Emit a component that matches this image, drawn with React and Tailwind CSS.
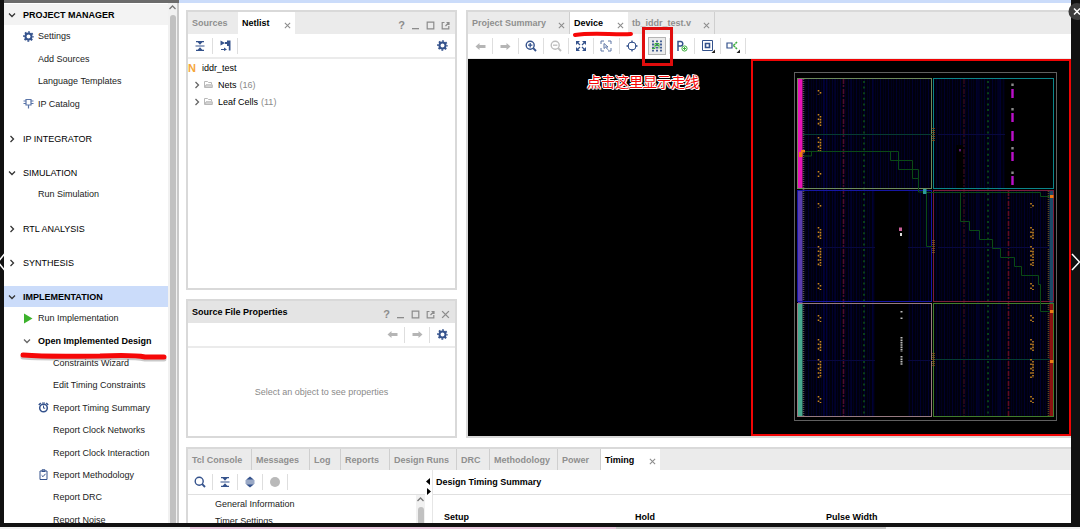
import React, { useState } from "react";
import { clsx } from "clsx";

const NAVY = "#34528c";

/* ---------- Icons ---------- */

const Chevron = ({ open, color = "#333" }) => (
  <svg width="8" height="8" viewBox="0 0 8 8" fill="none" stroke={color} strokeWidth="1.3" className="shrink-0">
    <path d={open ? "M1 2.5 L4 5.5 L7 2.5" : "M2.5 1 L5.5 4 L2.5 7"} />
  </svg>
);

const Gear = () => (
  <svg width="11" height="11" viewBox="0 0 11 11" fill="none" stroke={NAVY}>
    <circle cx="5.5" cy="5.5" r="3" strokeWidth="2" />
    <circle cx="5.5" cy="5.5" r="4.5" strokeWidth="1.6" strokeDasharray="1.8 1.73" strokeDashoffset="0.9" />
  </svg>
);

const Chip = () => (
  <svg width="11" height="11" viewBox="0 0 11 11" fill="none" stroke="#5a75a8" strokeWidth="1.2">
    <path d="M3 1.5 H8 V7 H3 Z M0.5 3 H3 M0.5 5.5 H3 M8 3 H10.5 M8 5.5 H10.5 M5.5 7 V10.5" />
  </svg>
);

const Play = () => (
  <svg width="11" height="11" viewBox="0 0 11 11">
    <path d="M1 0.5 L9.5 5.5 L1 10.5 Z" fill="#3cb22c" />
  </svg>
);

const Timer = () => (
  <svg width="11" height="11" viewBox="0 0 11 11" fill="none" stroke={NAVY}>
    <circle cx="5.5" cy="6" r="3.8" strokeWidth="1.5" />
    <path d="M5.5 3.5 V6.2 H7.2 M4 1 H7" />
    <path d="M0.8 3 L2.8 1 M10.2 3 L8.2 1" strokeWidth="1.5" />
  </svg>
);

const Clipboard = () => (
  <svg width="11" height="11" viewBox="0 0 11 11" fill="none" stroke={NAVY}>
    <path d="M2 2 H9 V10.5 H2 Z M4 0.8 H7 V2.5 H4 Z M3.6 6.3 L5 7.7 L7.5 4.8" />
  </svg>
);

const CollapseAll = () => (
  <svg width="10" height="12" viewBox="0 0 10 12" fill={NAVY}>
    <path d="M1 1 H9 V2.3 H1 Z M2.5 2 H7.5 L5 4.8 Z M0.5 5.4 H9.5 V6.6 H0.5 Z M5 7.2 L7.500 10 H2.5 Z M1 9.700 H9 V11 H1 Z" />
  </svg>
);

const ExpandAll = () => (
  <svg width="10" height="12" viewBox="0 0 10 12" fill={NAVY}>
    <path d="M5 0.5 L9 3.800 H1 Z M0.5 4.5 H9.5 V5.6 H0.5 Z M0.5 6.4 H9.5 V7.5 H0.5 Z M1 8.2 H9 L5 11.5 Z" />
  </svg>
);

const Hierarchy = () => (
  <svg width="11" height="11" viewBox="0 0 11 11" fill={NAVY}>
    <path d="M0.5 0.5 L5 3 L0.5 5.5 Z M5 2 H7 V4 H5 Z M7 0.5 H10.5 V10.5 H8.8 V6 H7 Z M1 9 H4 V7.5 L7 9.5 L4 11 V10 H1 Z" />
  </svg>
);

const Arrow = ({ right }) => (
  <svg width="11" height="9" viewBox="0 0 11 9" fill="#b5b5b5">
    <path d={right ? "M10.5 4.5 L6.5 1 V3 H0.5 V6 H6.5 V8 Z" : "M0.5 4.5 L4.5 1 V3 H10.5 V6 H4.5 V8 Z"} />
  </svg>
);

const Magnifier = ({ sign, color = NAVY }) => (
  <svg width="12" height="12" viewBox="0 0 12 12" fill="none" stroke={color}>
    <circle cx="5.2" cy="5.2" r="4" strokeWidth="1.4" />
    <path d="M8.2 8.2 L11 11" strokeWidth="1.9" />
    {sign && <path d={sign === "+" ? "M3 5.2 H7.4 M5.2 3 V7.4" : "M3 5.2 H7.4"} strokeWidth="1.3" />}
  </svg>
);

const Fit = () => (
  <svg width="12" height="12" viewBox="0 0 12 12" fill={NAVY} stroke={NAVY}>
    <path stroke="none" d="M1 1 H5 L1 5 Z M11 1 V5 L7 1 Z M1 11 V7 L5 11 Z M11 11 H7 L11 7 Z" />
    <path d="M2 2 L5 5 M10 2 L7 5 M2 10 L5 7 M10 10 L7 7" strokeWidth="1.2" />
  </svg>
);

const SelectArea = () => (
  <svg width="12" height="12" viewBox="0 0 12 12" fill="none" stroke="#5e76a6">
    <path d="M1 4 V1 H4 M8 1 H11 V4 M11 8 V11 H8 M4 11 H1 V8" />
    <path d="M4 3.5 V8.5 L5.5 7.2 L8.5 10 M4 3.5 L8 7 H5.5" />
  </svg>
);

const Crosshair = () => (
  <svg width="12" height="12" viewBox="0 0 12 12" fill="none" stroke={NAVY}>
    <circle cx="6" cy="6" r="4" />
    <path d="M6 0.5 V3 M6 9 V11.5 M0.5 6 H3 M9 6 H11.5" strokeWidth="1.3" />
  </svg>
);

const Routing = () => (
  <svg width="12" height="12" viewBox="0 0 12 12" fill="none">
    <path d="M2 0.5 V11.5 M6 0.5 V11.5 M10 0.5 V11.5" stroke={NAVY} strokeWidth="1.8" strokeDasharray="1.8 1.3" />
    <path d="M1 8.5 H4 V3.5 H8 V8.5 M4 5.5 H8" stroke="#3cae3c" />
  </svg>
);

const PinPlus = () => (
  <svg width="12" height="12" viewBox="0 0 12 12" fill="none">
    <path d="M2 11 V1.500 H5 A2.3 2.3 0 0 1 5 6 H2" stroke={NAVY} strokeWidth="1.5" />
    <circle cx="8.5" cy="8.5" r="2.6" stroke="#3cae3c" />
    <path d="M8.5 7 V10 M7 8.5 H10" stroke="#3cae3c" />
  </svg>
);

const Layers = () => (
  <svg width="14" height="14" viewBox="0 0 14 14" fill="none">
    <path d="M1.5 1.5 H11.5 V11.5 H1.5 Z" stroke={NAVY} />
    <path d="M4.5 4.5 H8.5 V8.5 H4.5 Z" stroke={NAVY} strokeWidth="1.6" />
    <path d="M14 10.5 V14 H10.5 Z" fill="#222" />
  </svg>
);

const Connect = () => (
  <svg width="14" height="14" viewBox="0 0 14 14" fill="none">
    <path d="M1 4 H6 V9 H1 Z" stroke={NAVY} strokeWidth="1.2" />
    <path d="M7.5 6.5 L11 3 M7.5 6.5 L11 10" stroke="#3cae3c" strokeWidth="1.6" strokeDasharray="2.2 0.6" />
    <path d="M14 10.5 V14 H10.5 Z" fill="#222" />
  </svg>
);

const Folder = () => (
  <svg width="9" height="9" viewBox="0 0 9 9" fill="none" stroke="#b8b8b8">
    <path d="M0.5 7.5 V1.5 H3.5 L4.5 2.5 H7.5 V4" />
    <path d="M0.8 7.5 L2 4.8 H8.3 V7.5 Z" fill="#d4d4d4" />
  </svg>
);

const CloseX = ({ size = 7 }) => (
  <svg width={size} height={size} viewBox="0 0 8 8" fill="none" stroke="#8c8c8c" strokeWidth="1.2">
    <path d="M1 1 L7 7 M7 1 L1 7" />
  </svg>
);

const ScrollUp = () => (
  <svg width="9" height="9" viewBox="0 0 9 9" fill="none" stroke="#777" strokeWidth="1.3">
    <path d="M1.5 6 L4.5 3 L7.5 6" />
  </svg>
);

/* ---------- Shared pieces ---------- */

const Tab = ({ label, active, closable, onClick, className }) => (
  <div className={clsx("flex shrink-0 items-center justify-between pl-1 pr-1", active ? "bg-white text-black" : "text-[#8f8f8f]", className)}>
    <button type="button" onClick={onClick} className="whitespace-nowrap font-bold">{label}</button>
    {closable && (
      <button type="button" aria-label={`Close ${label}`} className="pt-1"><CloseX /></button>
    )}
  </div>
);

const WindowButtons = ({ closable }) => (
  <div className="ml-auto flex items-center gap-[6px] pr-[5px] pt-1">
    <button type="button" aria-label="Help" className="text-[11px] font-bold leading-none text-[#8c8c8c]">?</button>
    <button type="button" aria-label="Minimize">
      <svg width="9" height="9" viewBox="0 0 9 9" fill="#8c8c8c"><path d="M1 7 H8 V8.3 H1 Z" /></svg>
    </button>
    <button type="button" aria-label="Maximize">
      <svg width="9" height="9" viewBox="0 0 9 9" fill="none" stroke="#8c8c8c" strokeWidth="1.2"><path d="M1.2 1.2 H7.8 V7.8 H1.2 Z" /></svg>
    </button>
    <button type="button" aria-label="Float">
      <svg width="9" height="9" viewBox="0 0 9 9" fill="none" stroke="#8c8c8c" strokeWidth="1.2"><path d="M3.5 1.5 H1.2 V7.8 H7.8 V5 M4.5 5 L8 1.5 M5.5 1.5 H8 V4" /></svg>
    </button>
    {closable && <button type="button" aria-label="Close"><CloseX size={9} /></button>}
  </div>
);

const ToolButton = ({ label, children, className }) => (
  <button type="button" aria-label={label} className={clsx("flex h-4 w-[25px] shrink-0 items-center justify-center", className)}>
    {children}
  </button>
);

/* ---------- Flow navigator ---------- */

const sections = [
  {
    title: "PROJECT MANAGER",
    open: true,
    head: "bg-[#f3f3f3] font-bold",
    body: "h-[90px]",
    items: [
      { label: "Settings", icon: <Gear /> },
      { label: "Add Sources" },
      { label: "Language Templates" },
      { label: "IP Catalog", icon: <Chip /> },
    ],
  },
  { title: "IP INTEGRATOR" },
  { title: "SIMULATION", open: true, body: "h-[22px]", items: [{ label: "Run Simulation" }] },
  { title: "RTL ANALYSIS" },
  { title: "SYNTHESIS" },
  {
    title: "IMPLEMENTATION",
    open: true,
    head: "bg-[#cbdcfa] font-bold",
    body: "h-[224px]",
    items: [
      { label: "Run Implementation", icon: <Play /> },
      { label: "Open Implemented Design", icon: <Chevron open color="#666" />, bold: true, marked: true },
      { label: "Constraints Wizard", deep: true },
      { label: "Edit Timing Constraints", deep: true },
      { label: "Report Timing Summary", deep: true, icon: <Timer /> },
      { label: "Report Clock Networks", deep: true },
      { label: "Report Clock Interaction", deep: true },
      { label: "Report Methodology", deep: true, icon: <Clipboard /> },
      { label: "Report DRC", deep: true },
      { label: "Report Noise", deep: true },
    ],
  },
];

const FlowNavigator = () => (
  <aside className="flex w-[175px] shrink-0 border-r-2 border-[#c9c9c9] bg-white">
    <nav className="flex flex-1 flex-col gap-[13px] overflow-hidden pt-px">
      {sections.map((section) => (
        <section key={section.title} className="shrink-0">
          <button type="button" className={clsx("flex h-[21px] w-full items-center gap-[7px] whitespace-nowrap pl-1 text-black", section.head)}>
            <Chevron open={section.open} />
            {section.title}
          </button>
          {section.items && (
            <ul className={clsx("grid auto-rows-fr", section.body)}>
              {section.items.map((item) => (
                <li key={item.label} className={clsx("relative flex items-center", item.deep ? "pl-[33px]" : "pl-[18px]")}>
                  <span className="flex w-[16px] shrink-0 items-center pl-px">{item.icon}</span>
                  <button type="button" className={clsx("whitespace-nowrap", item.bold && "font-bold text-black")}>{item.label}</button>
                  {item.marked && (
                    <svg className="absolute left-4 top-[23px] z-10" width="150" height="10" viewBox="0 0 150 10" fill="none">
                      <path d="M3 5 C30 7 50 5 80 6 C105 5 115 5 125 7 L144 7" stroke="#777" strokeWidth="5" strokeLinecap="round" opacity="0.4" />
                      <path d="M3 3 C30 5 50 4 80 4 C105 3 115 3 125 5 L144 5" stroke="#f60808" strokeWidth="5" strokeLinecap="round" />
                    </svg>
                  )}
                </li>
              ))}
            </ul>
          )}
        </section>
      ))}
    </nav>
    <div className="flex w-[9px] shrink-0 flex-col items-center bg-[#f1f1f1]">
      <ScrollUp />
      <div className="mt-[3px] w-[6px] flex-1 rounded-t-full bg-[#c1c1c1]" />
    </div>
  </aside>
);

/* ---------- Netlist and properties ---------- */

const NetlistPanel = () => {
  const [tab, setTab] = useState("Netlist");
  return (
    <section className="flex min-h-0 flex-1 flex-col border-2 border-[#d9d9d9] bg-white">
      <div className="flex h-[22px] shrink-0 bg-[#ebebeb]">
        <Tab label="Sources" className="w-[50px]" active={tab === "Sources"} onClick={() => setTab("Sources")} />
        <Tab label="Netlist" className="w-[57px]" closable active={tab === "Netlist"} onClick={() => setTab("Netlist")} />
        <WindowButtons />
      </div>
      <div className="flex h-[25px] shrink-0 items-center border-b-2 border-[#ebebeb]">
        <ToolButton label="Collapse all" className="border-r border-[#dedede]"><CollapseAll /></ToolButton>
        <ToolButton label="Show hierarchy" className="border-r border-[#dedede]"><Hierarchy /></ToolButton>
        <ToolButton label="Settings" className="ml-auto"><Gear /></ToolButton>
      </div>
      <ul>
        <li className="flex h-[17px] items-center gap-[6px] text-black">
          <span className="text-[11px] font-bold text-[#f5a63a]">N</span>
          iddr_test
        </li>
        {[["Nets", 16], ["Leaf Cells", 11]].map(([name, count]) => (
          <li key={name} className="flex h-[17px] items-center pl-[5px]">
            <Chevron color="#666" />
            <span className="ml-[3px] mr-[5px]"><Folder /></span>
            <span className="text-black">{name}</span>
            <span className="ml-[3px] text-[#8a8a8a]">({count})</span>
          </li>
        ))}
      </ul>
    </section>
  );
};

const PropertiesPanel = () => (
  <section className="flex h-[139px] shrink-0 flex-col border-2 border-[#d9d9d9] bg-white">
    <div className="flex h-[22px] shrink-0 items-center bg-[#e4e4e4] pl-1">
      <h2 className="font-bold text-black">Source File Properties</h2>
      <WindowButtons closable />
    </div>
    <div className="flex h-[25px] shrink-0 items-center justify-end border-b-2 border-[#ebebeb]">
      <ToolButton label="Back" className="border-r border-[#dedede]"><Arrow /></ToolButton>
      <ToolButton label="Forward" className="border-r border-[#dedede]"><Arrow right /></ToolButton>
      <ToolButton label="Settings"><Gear /></ToolButton>
    </div>
    <p className="flex flex-1 items-center justify-center text-[#8a8a8a]">Select an object to see properties</p>
  </section>
);

/* ---------- Device view ---------- */

const deviceTools = [
  { label: "Back", icon: <Arrow /> },
  { label: "Forward", icon: <Arrow right /> },
  { label: "Zoom in", icon: <Magnifier sign="+" /> },
  { label: "Zoom out", icon: <Magnifier sign="-" color="#bdbdbd" /> },
  { label: "Zoom fit", icon: <Fit /> },
  { label: "Select area", icon: <SelectArea /> },
  { label: "Autofit selection", icon: <Crosshair /> },
  { label: "Routing resources", icon: <Routing />, pressed: true },
  { label: "Draw pblock", icon: <PinPlus /> },
  { label: "Cell drawing", icon: <Layers /> },
  { label: "Show connections", icon: <Connect /> },
];

// Clock regions of the die: frame plus the tile columns inside
const regions = [
  { x: 45.5, y: 19.5, w: 134, h: 110, stroke: "#6d8a5c" },
  { x: 181.5, y: 19.5, w: 120, h: 110, stroke: "#0b858a" },
  { x: 45.5, y: 131.5, w: 134, h: 111, stroke: "#1616a4" },
  { x: 181.5, y: 131.5, w: 120, h: 111, stroke: "#7c1c3c" },
  { x: 45.5, y: 244.5, w: 134, h: 113, stroke: "#977a80" },
  { x: 181.5, y: 244.5, w: 120, h: 113, stroke: "#417d2c" },
];

const voids = [
  { x: 253, y: 20, w: 48, h: 109 },
  { x: 204, y: 86, w: 8, h: 43 },
  { x: 123, y: 132, w: 33, h: 110 },
  { x: 123, y: 245, w: 33, h: 112 },
];

const columns = [
  { x: 91.5, y1: 20, y2: 357, color: "#4d0c30", dash: "5 1 2 2" },
  { x: 212, y1: 20, y2: 357, color: "#2e081a", dash: "5 1 2 2" },
  { x: 256.5, y1: 132, y2: 357, color: "#5f0c22", dash: "5 1 2 2" },
  { x: 112, y1: 22, y2: 357, color: "#0b4f1c", dash: "2 3.6" },
  { x: 236, y1: 22, y2: 357, color: "#0b4f1c", dash: "2 3.6" },
  { x: 51.5, y1: 20, y2: 357, color: "#55554a", dash: "1 1" },
  { x: 296.5, y1: 132, y2: 357, color: "#5c4a1c", dash: "1 1" },
];

const cells = [
  [31, 36], [55, 68], [78, 94], [112, 118],
  [144, 149], [168, 181], [187, 207], [224, 231],
  [256, 263], [280, 293], [300, 319], [337, 344],
];

const Cells = ({ x, from = 0 }) => (
  <g stroke="#c9851f" fill="none">
    {cells.slice(from).map(([a, b]) => (
      <g key={a}>
        <path d={`M${x} ${a} V${b}`} strokeWidth="1.6" strokeDasharray="1.6 2.8" />
        <path d={`M${x + 2} ${a + 2} V${b}`} strokeWidth="1.6" strokeDasharray={b - a > 10 ? "1.6 1.2" : "1.6 2.4"} />
      </g>
    ))}
  </g>
);

const DeviceMap = () => (
  <svg width="316" height="372" viewBox="1 2 316 372" className="max-w-full">
    <defs>
      <pattern id="tiles" width="8" height="8" patternUnits="userSpaceOnUse">
        <rect width="8" height="8" fill="#00000c" />
        <path d="M0.5 0 V8" stroke="#00002e" />
        <path d="M3.5 0 V8 M5.5 0 V8" stroke="#00001f" />
      </pattern>
    </defs>
    <rect x="42.5" y="13.5" width="262" height="348" fill="none" stroke="#606060" />
    {regions.map((r) => (
      <rect key={`${r.x}-${r.y}`} x={r.x} y={r.y} width={r.w} height={r.h} fill="url(#tiles)" />
    ))}
    <path d="M71.5 20 V357 M74.5 20 V357 M83 20 V357 M99 20 V357 M121 20 V357 M226 20 V357 M247 20 V357" stroke="#00003c" />
    {voids.map((v) => (
      <rect key={`${v.x}-${v.y}`} x={v.x} y={v.y} width={v.w} height={v.h} fill="#000" />
    ))}
    {columns.map((c) => (
      <path key={c.x} d={`M${c.x} ${c.y1} V${c.y2}`} stroke={c.color} strokeWidth="1.6" strokeDasharray={c.dash} />
    ))}
    {/* I/O banks on both edges */}
    <rect x="46" y="20" width="4.5" height="110" fill="#e714b6" />
    <rect x="46" y="131" width="4.5" height="113" fill="#5a3eae" />
    <rect x="46" y="245" width="4.5" height="112" fill="#48a98f" />
    <rect x="297.5" y="132" width="4" height="112" fill="#1b4b69" />
    <rect x="297.5" y="245" width="4" height="112" fill="#8b1111" />
    {regions.map((r) => (
      <rect key={r.stroke} x={r.x} y={r.y} width={r.w} height={r.h} fill="none" stroke={r.stroke} />
    ))}
    {/* Clock spines */}
    <path d="M51 75.5 H180 M182 300.5 H298" stroke="#063c32" />
    <path d="M186 75.5 H253 M55 188.5 H123 M156 188.5 H180 M186 188.5 H297 M55 301.5 H123 M156 301.5 H180" stroke="#08083f" />
    <path d="M181.5 69 V83 M181.5 181 V194 M181.5 294 V308" stroke="#8a5420" strokeWidth="2.4" strokeDasharray="1 1" />
    <Cells x={66.5} />
    <Cells x={279} from={4} />
    <path d="M260.5 30 V39 M260.5 54 V63 M260.5 72 V82 M260.5 93 V102 M260.5 117 V126" stroke="#bb10c9" strokeWidth="2.4" />
    <path d="M260.5 24.5 V27 M260.5 49 V51.5 M260.5 88 V90.5 M260.5 112.5 V115" stroke="#8a8a8a" strokeWidth="2.4" />
    <rect x="207" y="90" width="2" height="2.4" fill="#5a1a70" />
    <rect x="147" y="168.5" width="3" height="3.5" fill="#c9609a" />
    <rect x="148" y="174" width="2" height="3" fill="#ddd" />
    <path d="M149.5 252 V254 M149.5 258.5 V260.5 M149.5 278 V293 M149.5 297 V306" stroke="#bcbcbc" strokeWidth="2" strokeDasharray="1.6 0.8" />
    {/* Routed nets */}
    <g fill="none" stroke="#0a4a16">
      <path d="M49 92.5 H138.5 V101.5 H160.5 V119.5 H166.5 V133 H171" />
      <path d="M146.5 92.5 V110.5 H166.5 V119.5 M138 92.5 H146.5 M52 97 H59.5 V92.5" />
      <path d="M174.5 135 V187.5 H180.5" />
      <path d="M174 133.5 H288.5 V137.5 H298" />
      <path d="M208.5 133.5 V162.5 H217.5 V171.5 H227.5 V180.5 H240.5 V189.5 H248.5 V198.5 H262.5 V207.5 H269.5 V216.5 H286.5 V225.5 H288.5 V252.5 H298" />
    </g>
    <path d="M47 93 H49 V91 H53 V93.5 H50.5 V98 H47 Z" fill="#f07a18" />
    <rect x="171" y="130" width="3.5" height="5" fill="#2a9c9a" />
    <path d="M298 136 H301.5 V139 H298 Z M298 251 H301.5 V254 H298 Z M298 301 H301.5 V304 H298 Z" fill="#ef7a12" />
  </svg>
);

const DevicePanel = () => {
  const [tab, setTab] = useState("Device");
  return (
    <section className="flex min-w-0 flex-1 flex-col border-y-2 border-l-2 border-[#d9d9d9] bg-white">
      <div className="flex h-[22px] shrink-0 bg-[#ebebeb]">
        <Tab label="Project Summary" className="w-[102px] border-r border-[#cfcfcf]" closable active={tab === "Project Summary"} onClick={() => setTab("Project Summary")} />
        <div className="relative flex">
          <Tab label="Device" className="w-[58px]" closable active={tab === "Device"} onClick={() => setTab("Device")} />
          <svg className="absolute left-[3px] top-[18px] z-10" width="61" height="8" viewBox="0 0 61 8" fill="none">
            <path d="M2 5 C20 2 40 5 58 4" stroke="#f60808" strokeWidth="4" strokeLinecap="round" />
          </svg>
        </div>
        <Tab label="tb_iddr_test.v" className="w-[87px] border-r border-[#cfcfcf]" closable active={tab === "tb_iddr_test.v"} onClick={() => setTab("tb_iddr_test.v")} />
      </div>
      <div className="flex h-[25px] shrink-0 items-center border-b border-[#ebebeb]">
        <div className="grid w-[278px] grid-cols-11">
          {deviceTools.map((tool) => (
            <div key={tool.label} className="relative flex h-4 items-center justify-center border-r border-[#dedede]">
              <button
                type="button"
                aria-label={tool.label}
                className={clsx("flex h-[18px] w-[18px] shrink-0 items-center justify-center", tool.pressed && "border border-[#b4b4b4] bg-[#ebebeb]")}
              >
                {tool.icon}
              </button>
              {tool.pressed && (
                <div className="pointer-events-none absolute -left-[3px] -top-[11px] z-10 h-[39px] w-[31px] border-[3px] border-[#e00c0c] shadow-md" />
              )}
            </div>
          ))}
        </div>
      </div>
      <div className="relative flex min-h-0 flex-1 justify-end bg-black">
        <div className="absolute left-[119px] top-3 whitespace-nowrap font-['Noto_Sans_CJK_SC',sans-serif] text-[14px] leading-5 text-[#f60808] [text-shadow:1px_0_#fff,-1px_0_#fff,0_1px_#fff,0_-1px_#fff,1px_1px_#fff,-1px_-1px_#fff]">
          点击这里显示走线
        </div>
        <div className="overflow-hidden border-2 border-[#f00505]">
          <DeviceMap />
        </div>
      </div>
    </section>
  );
};

/* ---------- Bottom results area ---------- */

const resultTabs = [
  ["Tcl Console", "w-[64px] border-r"],
  ["Messages", "w-[58px] border-r"],
  ["Log", "w-[31px] border-r"],
  ["Reports", "w-[49px] border-r"],
  ["Design Runs", "w-[67px] border-r"],
  ["DRC", "w-[33px] border-r"],
  ["Methodology", "w-[68px] border-r"],
  ["Power", "w-[43px] border-r"],
  ["Timing", "w-[59px]"],
];

const ResultsPanel = () => {
  const [tab, setTab] = useState("Timing");
  return (
    <section className="flex h-[76px] shrink-0 flex-col overflow-hidden border-l-2 border-t-2 border-[#d9d9d9] bg-white">
      <div className="flex h-[21px] shrink-0 bg-[#ebebeb]">
        {resultTabs.map(([name, width]) => (
          <Tab key={name} label={name} className={clsx("border-[#cfcfcf]", width)} closable={name === "Timing"} active={tab === name} onClick={() => setTab(name)} />
        ))}
      </div>
      <div className="flex min-h-0 flex-1">
        <div className="flex w-[237px] shrink-0 flex-col">
          <div className="flex h-[25px] shrink-0 items-center border-b border-[#e0e0e0]">
            <ToolButton label="Search" className="border-r border-[#dedede]"><Magnifier /></ToolButton>
            <ToolButton label="Collapse all" className="border-r border-[#dedede]"><CollapseAll /></ToolButton>
            <ToolButton label="Expand all" className="border-r border-[#dedede]"><ExpandAll /></ToolButton>
            <ToolButton label="Stop" className="border-r border-[#dedede]">
              <span className="size-[10px] rounded-full bg-[#b9b9b9]" />
            </ToolButton>
          </div>
          <div className="flex min-h-0 flex-1 overflow-hidden">
            <ul className="flex-1 pl-[27px]">
              <li className="flex h-[17px] items-center">General Information</li>
              <li className="flex h-[17px] items-center">Timer Settings</li>
            </ul>
            <div className="flex w-[9px] flex-col items-center bg-[#f1f1f1]">
              <ScrollUp />
              <div className="mt-[3px] w-[6px] flex-1 rounded-t-full bg-[#c1c1c1]" />
            </div>
          </div>
        </div>
        <div className="w-[8px] shrink-0 border-r border-[#e6e6e6] pt-[7px]">
          <svg width="6" height="18" viewBox="0 0 6 18" fill="#000">
            <path d="M5 1 V8 L1 4.5 Z M2 11 V18 L6 14.5 Z" />
          </svg>
        </div>
        <div className="min-w-0 flex-1">
          <h2 className="flex h-[25px] items-center border-b border-[#e0e0e0] pl-[3px] font-bold text-black">Design Timing Summary</h2>
          <div className="flex pl-[11px] pt-4 font-bold text-black">
            <h3 className="w-[191px]">Setup</h3>
            <h3 className="w-[191px]">Hold</h3>
            <h3>Pulse Width</h3>
          </div>
        </div>
      </div>
    </section>
  );
};

export default function App() {
  return (
    <div className="relative flex h-screen flex-col overflow-hidden bg-[#111] font-['Liberation_Sans',Arial,sans-serif] text-[9px] leading-3 text-[#222]">
      <div className="flex min-h-0 flex-1 pl-1 pr-[9px]">
        <div className="flex min-w-0 flex-1 flex-col bg-white">
          <div className="flex h-[3px] shrink-0">
            <div className="w-[175px] bg-[#6b6b6b]" />
            <div className="flex-1 bg-[#cbdcfa]" />
          </div>
          <div className="flex min-h-0 flex-1">
            <FlowNavigator />
            <main className="flex min-w-0 flex-1 flex-col gap-[9px] pl-[7px] pt-[7px]">
              <div className="flex min-h-0 flex-1 gap-[9px]">
                <div className="flex w-[271px] shrink-0 flex-col gap-[9px]">
                  <NetlistPanel />
                  <PropertiesPanel />
                </div>
                <DevicePanel />
              </div>
              <ResultsPanel />
            </main>
          </div>
        </div>
      </div>
      <div className="h-1 shrink-0" />
      <div className="flex h-[2px] shrink-0 bg-[#f0f0f0]">
        <div className="ml-[190px] w-[426px] bg-[#e6c6dc]" />
        <div className="w-[270px] bg-[#c4c4c4]" />
      </div>

      {/* Lightbox controls over the slide */}
      <button type="button" aria-label="Previous" className="absolute left-0 top-1/2 -mt-3">
        <svg width="5" height="18" viewBox="0 0 5 18" fill="none" stroke="#fff" strokeWidth="1.5"><path d="M4.5 1 L-2 9 L4.5 17" /></svg>
      </button>
      <button type="button" aria-label="Next" className="absolute right-0 top-1/2 -mt-3">
        <svg width="9" height="18" viewBox="0 0 9 18" fill="none" stroke="#fff" strokeWidth="1.5"><path d="M1 1 L8.5 9 L1 17" /></svg>
      </button>
      <button type="button" aria-label="Close preview" className="absolute right-0 top-0">
        <svg width="12" height="22" viewBox="0 0 12 22" fill="none">
          <circle cx="9" cy="11.5" r="8.5" fill="#3c3c3c" />
          <path d="M6 8.5 L12 14.5 M6 14.5 L12 8.5" stroke="#fff" strokeWidth="1.5" />
        </svg>
      </button>
    </div>
  );
}
